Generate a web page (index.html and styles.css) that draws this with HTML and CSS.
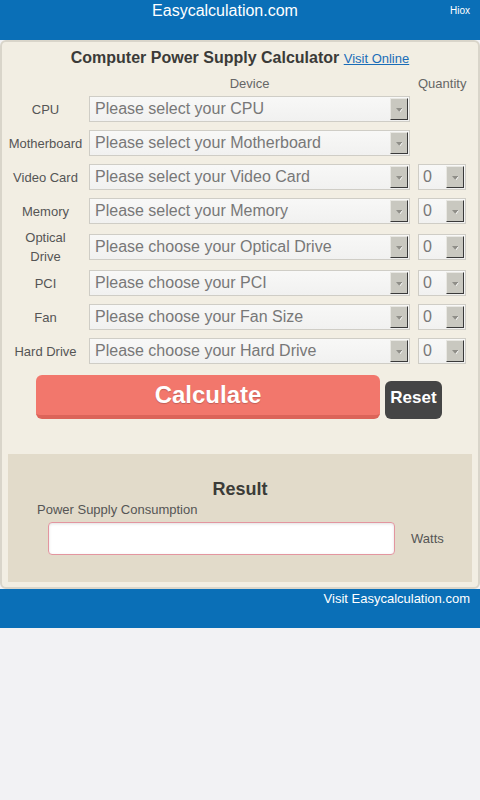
FILE: index.html
```html
<!DOCTYPE html>
<html>
<head>
<meta charset="utf-8">
<title>Computer Power Supply Calculator</title>
<link rel="stylesheet" href="styles.css">
</head>
<body>
<header class="top">
  <div class="brand">Easycalculation.com</div>
  <div class="hiox">Hiox</div>
</header>
<main class="box">
  <h1 class="title">Computer Power Supply Calculator <a href="#" class="visit">Visit Online</a></h1>
  <div class="grid">
    <div class="head"></div><div class="head">Device</div><div class="head">Quantity</div>

    <div class="lab">CPU</div>
    <div class="cell"><div class="sel"><span class="txt">Please select your CPU</span><span class="arr"><svg width="9" height="6" viewBox="0 0 9 6"><polygon points="1,1 8,1 4.5,5" fill="#8f8e88"/><line x1="7.5" y1="1.5" x2="4.8" y2="5" stroke="#fff" stroke-width="1"/></svg></span></div></div>
    <div class="cell"></div>

    <div class="lab">Motherboard</div>
    <div class="cell"><div class="sel"><span class="txt">Please select your Motherboard</span><span class="arr"><svg width="9" height="6" viewBox="0 0 9 6"><polygon points="1,1 8,1 4.5,5" fill="#8f8e88"/><line x1="7.5" y1="1.5" x2="4.8" y2="5" stroke="#fff" stroke-width="1"/></svg></span></div></div>
    <div class="cell"></div>

    <div class="lab">Video Card</div>
    <div class="cell"><div class="sel"><span class="txt">Please select your Video Card</span><span class="arr"><svg width="9" height="6" viewBox="0 0 9 6"><polygon points="1,1 8,1 4.5,5" fill="#8f8e88"/><line x1="7.5" y1="1.5" x2="4.8" y2="5" stroke="#fff" stroke-width="1"/></svg></span></div></div>
    <div class="cell"><div class="sel qty"><span class="txt">0</span><span class="arr"><svg width="9" height="6" viewBox="0 0 9 6"><polygon points="1,1 8,1 4.5,5" fill="#8f8e88"/><line x1="7.5" y1="1.5" x2="4.8" y2="5" stroke="#fff" stroke-width="1"/></svg></span></div></div>

    <div class="lab">Memory</div>
    <div class="cell"><div class="sel"><span class="txt">Please select your Memory</span><span class="arr"><svg width="9" height="6" viewBox="0 0 9 6"><polygon points="1,1 8,1 4.5,5" fill="#8f8e88"/><line x1="7.5" y1="1.5" x2="4.8" y2="5" stroke="#fff" stroke-width="1"/></svg></span></div></div>
    <div class="cell"><div class="sel qty"><span class="txt">0</span><span class="arr"><svg width="9" height="6" viewBox="0 0 9 6"><polygon points="1,1 8,1 4.5,5" fill="#8f8e88"/><line x1="7.5" y1="1.5" x2="4.8" y2="5" stroke="#fff" stroke-width="1"/></svg></span></div></div>

    <div class="lab">Optical<br>Drive</div>
    <div class="cell"><div class="sel"><span class="txt">Please choose your Optical Drive</span><span class="arr"><svg width="9" height="6" viewBox="0 0 9 6"><polygon points="1,1 8,1 4.5,5" fill="#8f8e88"/><line x1="7.5" y1="1.5" x2="4.8" y2="5" stroke="#fff" stroke-width="1"/></svg></span></div></div>
    <div class="cell"><div class="sel qty"><span class="txt">0</span><span class="arr"><svg width="9" height="6" viewBox="0 0 9 6"><polygon points="1,1 8,1 4.5,5" fill="#8f8e88"/><line x1="7.5" y1="1.5" x2="4.8" y2="5" stroke="#fff" stroke-width="1"/></svg></span></div></div>

    <div class="lab">PCI</div>
    <div class="cell"><div class="sel"><span class="txt">Please choose your PCI</span><span class="arr"><svg width="9" height="6" viewBox="0 0 9 6"><polygon points="1,1 8,1 4.5,5" fill="#8f8e88"/><line x1="7.5" y1="1.5" x2="4.8" y2="5" stroke="#fff" stroke-width="1"/></svg></span></div></div>
    <div class="cell"><div class="sel qty"><span class="txt">0</span><span class="arr"><svg width="9" height="6" viewBox="0 0 9 6"><polygon points="1,1 8,1 4.5,5" fill="#8f8e88"/><line x1="7.5" y1="1.5" x2="4.8" y2="5" stroke="#fff" stroke-width="1"/></svg></span></div></div>

    <div class="lab">Fan</div>
    <div class="cell"><div class="sel"><span class="txt">Please choose your Fan Size</span><span class="arr"><svg width="9" height="6" viewBox="0 0 9 6"><polygon points="1,1 8,1 4.5,5" fill="#8f8e88"/><line x1="7.5" y1="1.5" x2="4.8" y2="5" stroke="#fff" stroke-width="1"/></svg></span></div></div>
    <div class="cell"><div class="sel qty"><span class="txt">0</span><span class="arr"><svg width="9" height="6" viewBox="0 0 9 6"><polygon points="1,1 8,1 4.5,5" fill="#8f8e88"/><line x1="7.5" y1="1.5" x2="4.8" y2="5" stroke="#fff" stroke-width="1"/></svg></span></div></div>

    <div class="lab">Hard Drive</div>
    <div class="cell"><div class="sel"><span class="txt">Please choose your Hard Drive</span><span class="arr"><svg width="9" height="6" viewBox="0 0 9 6"><polygon points="1,1 8,1 4.5,5" fill="#8f8e88"/><line x1="7.5" y1="1.5" x2="4.8" y2="5" stroke="#fff" stroke-width="1"/></svg></span></div></div>
    <div class="cell"><div class="sel qty"><span class="txt">0</span><span class="arr"><svg width="9" height="6" viewBox="0 0 9 6"><polygon points="1,1 8,1 4.5,5" fill="#8f8e88"/><line x1="7.5" y1="1.5" x2="4.8" y2="5" stroke="#fff" stroke-width="1"/></svg></span></div></div>
  </div>

  <div class="buttons">
    <button class="calc">Calculate</button>
    <button class="reset">Reset</button>
  </div>

  <section class="result">
    <h2 class="rtitle">Result</h2>
    <div class="rlabel">Power Supply Consumption</div>
    <div class="rrow">
      <div class="out"></div>
      <span class="unit">Watts</span>
    </div>
  </section>
</main>
<footer class="foot">
  <a href="#" class="flink">Visit Easycalculation.com</a>
</footer>
</body>
</html>
```

FILE: styles.css
```css
* { box-sizing: border-box; }
html, body { margin: 0; padding: 0; }
body {
  background: #f2f2f4;
  font-family: "Liberation Sans", Arial, sans-serif;
  width: 480px;
}
.top {
  background: #0a6fb7;
  height: 40px;
  display: flex;
  color: #fff;
}
.brand {
  flex: 1;
  text-align: center;
  font-size: 16px;
  line-height: 19px;
  padding-top: 1px;
}
.hiox {
  width: 30px;
  font-size: 10px;
  line-height: 20px;
  padding-top: 1px;
}
.box {
  display: block;
  background: #f2eee3;
  border: 2px solid #d9d5ca;
  border-radius: 6px;
  height: 549px;
}
.title {
  margin: 0;
  padding-top: 6px;
  text-align: center;
  font-size: 16px;
  line-height: 20px;
  font-weight: bold;
  color: #3b3b38;
}
.visit {
  font-size: 13px;
  font-weight: normal;
  color: #1a6db8;
  text-decoration: underline;
}
.grid {
  display: grid;
  grid-template-columns: 87px 329px 48px;
}
.head {
  padding-top: 7px;
  height: 23px;
  font-size: 13px;
  line-height: 16px;
  color: #666;
  text-align: center;
}
.head:nth-child(2) { padding-right: 8px; }
.lab {
  min-height: 34px;
  display: flex;
  align-items: center;
  justify-content: center;
  text-align: center;
  font-size: 13px;
  line-height: 19px;
  color: #555;
}
.cell {
  display: flex;
  align-items: center;
  min-height: 34px;
}
.sel {
  width: 321px;
  height: 26px;
  border: 1px solid #cfcdc6;
  background: linear-gradient(#f8f8f7, #f1f1f0);
  display: flex;
  align-items: center;
  justify-content: space-between;
  padding: 0 1px 0 5px;
}
.sel.qty { width: 48px; padding-left: 4px; }
.txt {
  font-size: 16px;
  color: #787878;
  white-space: nowrap;
}
.arr {
  width: 18px;
  height: 22px;
  background: #c9c8c0;
  border-top: 1px solid #e8e7e2;
  border-left: 1px solid #e8e7e2;
  border-right: 1px solid #3a3a3a;
  border-bottom: 1px solid #3a3a3a;
  display: flex;
  align-items: center;
  justify-content: center;
  padding-top: 1px;
}
.buttons {
  display: flex;
  justify-content: center;
  align-items: flex-end;
  gap: 5px;
  margin-top: 7px;
  padding-right: 2px;
}
.calc {
  width: 344px;
  height: 44px;
  border: none;
  border-bottom: 4px solid #dc6459;
  border-radius: 6px;
  background: #f2776c;
  color: #fff;
  font-family: "Liberation Sans", Arial, sans-serif;
  font-weight: bold;
  font-size: 24px;
  text-shadow: 0 1px 1px rgba(0,0,0,0.2);
  padding: 0;
  line-height: 34px;
}
.reset {
  width: 57px;
  height: 38px;
  border: none;
  border-radius: 6px;
  background: #454545;
  color: #fff;
  font-family: "Liberation Sans", Arial, sans-serif;
  font-weight: bold;
  font-size: 17px;
  padding: 0 0 4px;
}
.result {
  margin: 35px 6px 0;
  background: #e2dbca;
  height: 128px;
  padding-top: 25px;
}
.rtitle {
  margin: 0;
  text-align: center;
  font-size: 18px;
  line-height: 20px;
  color: #3b3b38;
}
.rlabel {
  margin-top: 3px;
  padding-left: 29px;
  font-size: 13px;
  line-height: 16px;
  color: #555;
}
.rrow {
  display: flex;
  align-items: center;
  margin-top: 4px;
  padding-left: 40px;
}
.out {
  width: 347px;
  height: 33px;
  background: #fff;
  border: 1px solid #e3959f;
  border-radius: 4px;
  box-shadow: inset 0 1px 3px rgba(0,0,0,0.12);
}
.unit {
  margin-left: 16px;
  font-size: 13px;
  color: #555;
}
.foot {
  background: #0a6fb7;
  height: 39px;
  text-align: right;
  padding: 0 10px 0 0;
}
.flink {
  color: #fff;
  font-size: 13px;
  line-height: 16px;
  text-decoration: none;
}
```
